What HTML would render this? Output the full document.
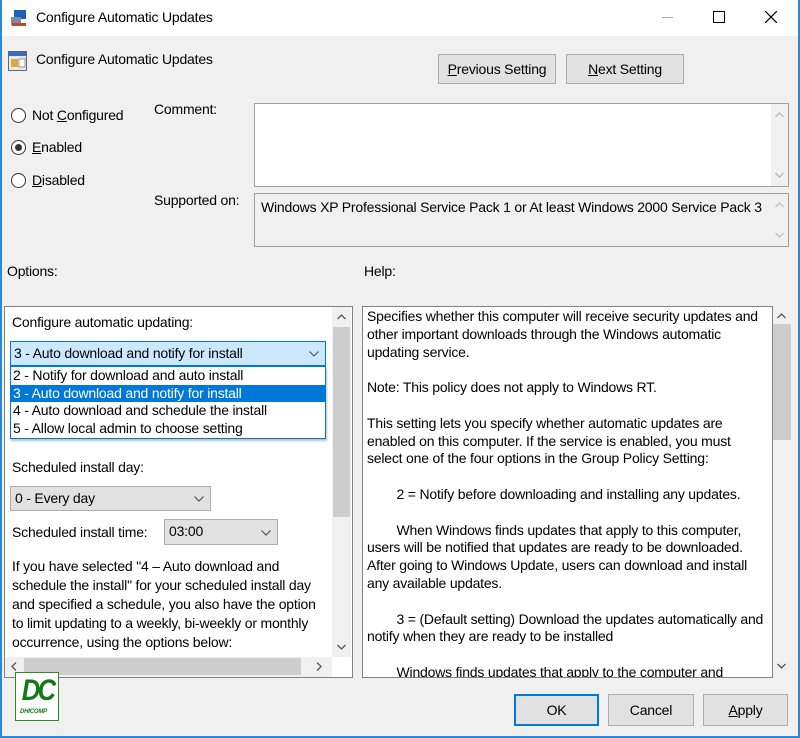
<!DOCTYPE html>
<html><head><meta charset="utf-8"><style>
*{margin:0;padding:0;box-sizing:border-box}
body{width:800px;height:738px;overflow:hidden;background:#f0f0f0;font-family:"Liberation Sans",sans-serif;font-size:14px;color:#000;position:relative;letter-spacing:-0.2px}
.a{position:absolute;white-space:nowrap}
.btn{position:absolute;background:#e1e1e1;border:1px solid #adadad;text-align:center;line-height:28px}
.box{position:absolute;border:1px solid #a0a0a0;background:#fff}
.rad{position:absolute;width:15px;height:15px;border:1px solid #333;border-radius:50%;background:#fff}
.sel{position:absolute;background:#e1e1e1;border:1px solid #adadad;padding-left:4px;line-height:23px}
.sb{position:absolute;background:#f0f0f0}
.th{position:absolute;background:#cdcdcd}
svg.c{position:absolute}
u{text-decoration:underline}
</style></head><body>
<div class="a" style="left:0;top:0;width:800px;height:36px;background:#fff"></div>
<div class="a" style="left:0;top:0;width:2px;height:738px;background:#2a8ad8"></div>
<div class="a" style="left:798px;top:0;width:2px;height:738px;background:#2a8ad8"></div>
<div class="a" style="left:0;top:736px;width:800px;height:2px;background:#2a8ad8"></div>
<svg class="a" style="left:10px;top:9px" width="18" height="18"><rect x="4" y="1" width="12" height="9" fill="#1f5fb5"/><rect x="1" y="8" width="10" height="8" fill="#7a8ca8"/><rect x="2" y="14" width="14" height="3" fill="#c04a20"/></svg>
<div class="a" style="left:36px;top:9px">Configure Automatic Updates</div>
<div class="a" style="left:662px;top:17px;width:11px;height:1px;background:#aaa"></div>
<div class="a" style="left:713px;top:11px;width:12px;height:12px;border:1px solid #000"></div>
<svg class="a" style="left:765px;top:11px" width="12" height="12"><path d="M0 0L12 12M12 0L0 12" stroke="#000" stroke-width="1.2"/></svg>
<svg class="a" style="left:8px;top:51px" width="19" height="20"><rect x="0.5" y="0.5" width="18" height="19" fill="#e8e8e8" stroke="#667"/><rect x="1" y="1" width="17" height="4" fill="#3a6fc0"/><rect x="3" y="8" width="7" height="8" fill="#d9a940"/><rect x="11" y="8" width="6" height="8" fill="#fff" stroke="#999"/></svg>
<div class="a" style="left:36px;top:51px">Configure Automatic Updates</div>
<div class="btn" style="left:438px;top:54px;width:118px;height:30px"><u>P</u>revious Setting</div>
<div class="btn" style="left:566px;top:54px;width:118px;height:30px"><u>N</u>ext Setting</div>
<div class="rad" style="left:11px;top:108px"></div><div class="a" style="left:32px;top:107px">Not <u>C</u>onfigured</div>
<div class="rad" style="left:11px;top:140px"></div><div class="a" style="left:15px;top:144px;width:7px;height:7px;border-radius:50%;background:#333"></div><div class="a" style="left:32px;top:139px"><u>E</u>nabled</div>
<div class="rad" style="left:11px;top:173px"></div><div class="a" style="left:32px;top:172px"><u>D</u>isabled</div>
<div class="a" style="left:154px;top:101px">Comment:</div>
<div class="box" style="left:254px;top:103px;width:535px;height:84px"><div class="sb" style="right:0;top:0;width:17px;height:82px"></div>
<svg class="c" style="right:4px;top:8px" width="9" height="6"><path d="M0.5 5L4.5 1L8.5 5" fill="none" stroke="#aaa"/></svg>
<svg class="c" style="right:4px;top:68px" width="9" height="6"><path d="M0.5 1L4.5 5L8.5 1" fill="none" stroke="#aaa"/></svg></div>
<div class="a" style="left:154px;top:192px">Supported on:</div>
<div class="box" style="left:254px;top:193px;width:535px;height:54px;background:#f0f0f0"><div class="a" style="left:6px;top:5px">Windows XP Professional Service Pack 1 or At least Windows 2000 Service Pack 3</div>
<svg class="c" style="right:4px;top:8px" width="9" height="6"><path d="M0.5 5L4.5 1L8.5 5" fill="none" stroke="#bbb"/></svg>
<svg class="c" style="right:4px;top:38px" width="9" height="6"><path d="M0.5 1L4.5 5L8.5 1" fill="none" stroke="#bbb"/></svg></div>
<div class="a" style="left:7px;top:263px">Options:</div>
<div class="a" style="left:364px;top:263px">Help:</div>
<div class="box" style="left:4px;top:306px;width:349px;height:372px;border-color:#828282">
 <div class="sb" style="left:327px;top:0;width:19px;height:350px"></div>
 <div class="th" style="left:328px;top:20px;width:17px;height:190px"></div>
 <svg class="c" style="left:332px;top:7px" width="9" height="6"><path d="M0.5 5L4.5 1L8.5 5" fill="none" stroke="#555" stroke-width="1.3"/></svg>
 <svg class="c" style="left:332px;top:337px" width="9" height="6"><path d="M0.5 1L4.5 5L8.5 1" fill="none" stroke="#555" stroke-width="1.3"/></svg>
 <div class="sb" style="left:0;top:350px;width:327px;height:20px"></div>
 <div class="th" style="left:19px;top:351px;width:277px;height:17px"></div>
 <svg class="c" style="left:6px;top:355px" width="6" height="9"><path d="M5 0.5L1 4.5L5 8.5" fill="none" stroke="#555" stroke-width="1.3"/></svg>
 <svg class="c" style="left:311px;top:355px" width="6" height="9"><path d="M1 0.5L5 4.5L1 8.5" fill="none" stroke="#555" stroke-width="1.3"/></svg>
</div>
<div class="a" style="left:12px;top:314px">Configure automatic updating:</div>
<div class="a" style="left:10px;top:341px;width:316px;height:25px;background:#cce8ff;border:1px solid #0078d7;padding-left:3px;line-height:23px">3 - Auto download and notify for install<svg class="c" style="right:6px;top:9px" width="10" height="6"><path d="M0.5 0.5L5 5L9.5 0.5" fill="none" stroke="#444"/></svg></div>
<div class="a" style="left:10px;top:366px;width:316px;height:73px;background:#fff;border:1px solid #0078d7;box-shadow:1px 2px 2px rgba(0,0,0,.25)">
 <div style="padding-left:2px;height:17.5px;line-height:17px">2 - Notify for download and auto install</div>
 <div style="padding-left:2px;height:17.5px;line-height:17px;background:#0078d7;color:#fff">3 - Auto download and notify for install</div>
 <div style="padding-left:2px;height:17.5px;line-height:17px">4 - Auto download and schedule the install</div>
 <div style="padding-left:2px;height:17.5px;line-height:17px">5 - Allow local admin to choose setting</div>
</div>
<div class="a" style="left:12px;top:459px">Scheduled install day:</div>
<div class="sel" style="left:10px;top:486px;width:201px;height:25px">0 - Every day<svg class="c" style="right:6px;top:9px" width="10" height="6"><path d="M0.5 0.5L5 5L9.5 0.5" fill="none" stroke="#444"/></svg></div>
<div class="a" style="left:12px;top:524px">Scheduled install time:</div>
<div class="sel" style="left:164px;top:519px;width:114px;height:26px">03:00<svg class="c" style="right:6px;top:10px" width="10" height="6"><path d="M0.5 0.5L5 5L9.5 0.5" fill="none" stroke="#444"/></svg></div>
<div class="a" style="left:12px;top:557px;line-height:19px;white-space:normal;width:312px">If you have selected "4 – Auto download and schedule the install" for your scheduled install day and specified a schedule, you also have the option to limit updating to a weekly, bi-weekly or monthly occurrence, using the options below:</div>
<div class="box" style="left:362px;top:306px;width:411px;height:372px;border-color:#828282;overflow:hidden">
<div style="position:absolute;left:4px;top:1px;width:398px;line-height:17.8px;white-space:normal">Specifies whether this computer will receive security updates and other important downloads through the Windows automatic updating service.<br><br>Note: This policy does not apply to Windows RT.<br><br>This setting lets you specify whether automatic updates are enabled on this computer. If the service is enabled, you must select one of the four options in the Group Policy Setting:<br><br>&nbsp;&nbsp;&nbsp;&nbsp;&nbsp;&nbsp;&nbsp;&nbsp;2 = Notify before downloading and installing any updates.<br><br>&nbsp;&nbsp;&nbsp;&nbsp;&nbsp;&nbsp;&nbsp;&nbsp;When Windows finds updates that apply to this computer, users will be notified that updates are ready to be downloaded. After going to Windows Update, users can download and install any available updates.<br><br>&nbsp;&nbsp;&nbsp;&nbsp;&nbsp;&nbsp;&nbsp;&nbsp;3 = (Default setting) Download the updates automatically and notify when they are ready to be installed<br><br>&nbsp;&nbsp;&nbsp;&nbsp;&nbsp;&nbsp;&nbsp;&nbsp;Windows finds updates that apply to the computer and</div></div>
<div class="th" style="left:773px;top:324px;width:18px;height:116px"></div>
<svg class="c" style="left:777px;top:313px" width="9" height="6"><path d="M0.5 5L4.5 1L8.5 5" fill="none" stroke="#555" stroke-width="1.3"/></svg>
<svg class="c" style="left:777px;top:663px" width="9" height="6"><path d="M0.5 1L4.5 5L8.5 1" fill="none" stroke="#555" stroke-width="1.3"/></svg>
<div class="btn" style="left:514px;top:694px;width:85px;height:32px;border:2px solid #0078d7;line-height:28px">OK</div>
<div class="btn" style="left:608px;top:694px;width:86px;height:32px;line-height:30px">Cancel</div>
<div class="btn" style="left:703px;top:694px;width:85px;height:32px;line-height:30px"><u>A</u>pply</div>
<div class="a" style="left:15px;top:672px;width:44px;height:49px;border:1px solid #2d8a2d;background:#fff">
<div class="a" style="left:3px;top:1px;font:italic bold 30px 'Liberation Sans',sans-serif;color:#0f7a18;letter-spacing:-3px;transform:scaleX(0.85)">DC</div>
<div class="a" style="left:4px;top:36px;font:italic bold 6px 'Liberation Sans',sans-serif;color:#0f7a18">DHICOMP</div></div>
</body></html>
